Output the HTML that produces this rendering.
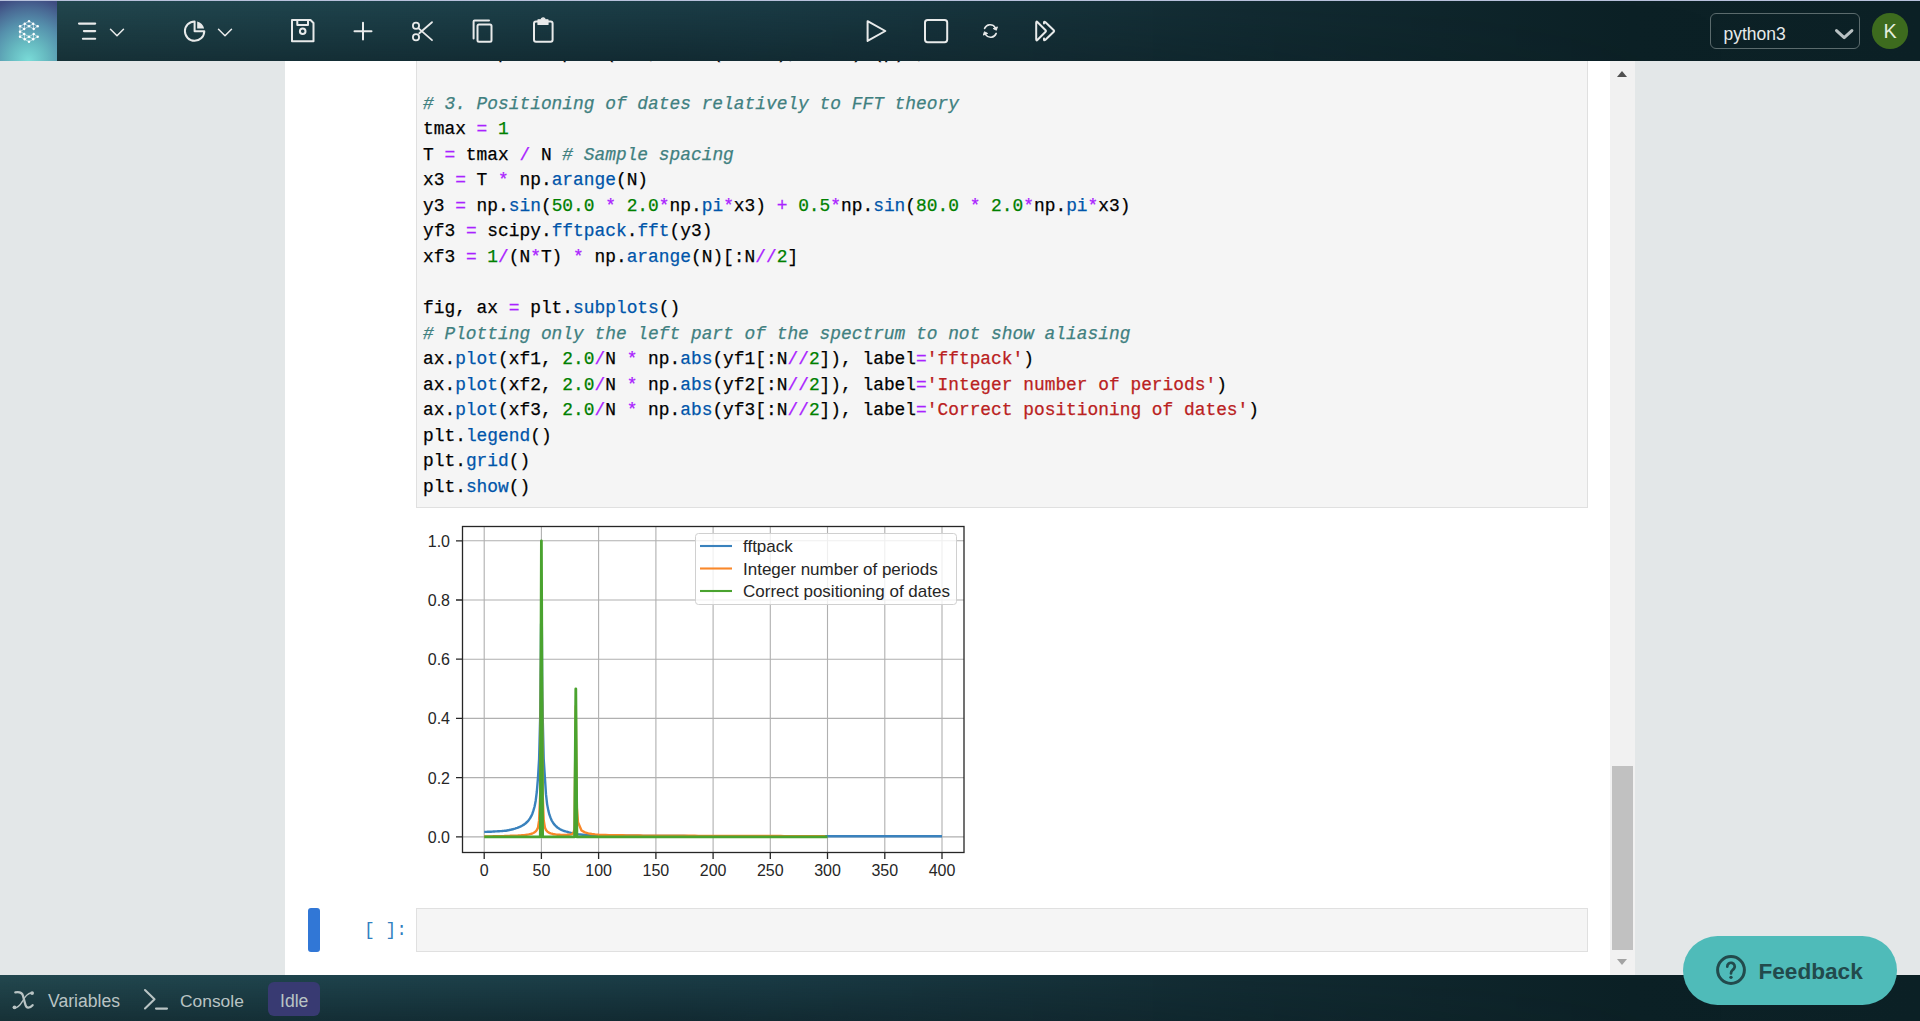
<!DOCTYPE html>
<html><head><meta charset="utf-8">
<style>
*{margin:0;padding:0;box-sizing:border-box}
html,body{width:1920px;height:1021px;overflow:hidden;background:#e3e7e8;font-family:"Liberation Sans",sans-serif;position:relative}
.abs{position:absolute}
#topline{left:0;top:0;width:1920px;height:1px;background:#b8c1dc}
#header{left:0;top:1px;width:1920px;height:60px;background:linear-gradient(90deg,#23484f 0%,#1f444d 15%,#1a3b45 40%,#122b32 65%,#0c2126 85%,#0b2025 100%)}
.shade{left:0;top:0;width:1920px;height:100%;background:linear-gradient(180deg,rgba(0,0,0,0) 0%,rgba(3,12,16,0.38) 100%);-webkit-mask-image:linear-gradient(90deg,#000 0%,#000 35%,rgba(0,0,0,0.3) 70%,rgba(0,0,0,0) 90%)}
#logo{left:0;top:0;width:57px;height:60px;background:radial-gradient(ellipse 62px 64px at 50% 100%,#7adcd8 0%,#66b9c0 30%,#5590ac 60%,#4a6c96 82%,#3f4c82 100%)}
#nb{left:285px;top:61px;width:1350px;height:914px;background:#fff}
#sbtrack{left:1610px;top:61px;width:25px;height:914px;background:#f1f1f1}
#sbthumb{left:1612px;top:766px;width:21px;height:184px;background:#c1c1c1}
.arr{width:0;height:0;border-left:5.6px solid transparent;border-right:5.6px solid transparent}
#codebox{left:416px;top:40px;width:1172px;height:468px;background:#f5f5f5;border:1px solid #e0e0e0}
#code{left:423px;top:0px;font-family:"Liberation Mono",monospace;font-size:17.87px;line-height:25.54px;white-space:pre;color:#000;-webkit-text-stroke:0.25px currentColor}
.c{color:#408080;font-style:italic}
.o{color:#aa22ff}
.n{color:#008000}
.p{color:#0055aa}
.s{color:#ba2121}
#footer{left:0;top:975px;width:1920px;height:46px;background:linear-gradient(90deg,#23484f 0%,#1f444d 15%,#1a3b45 40%,#122b32 65%,#0c2126 85%,#0b2025 100%)}
.ft{color:#b9c4c4;font-size:17.6px;top:990.5px}
#idle{left:268px;top:982px;width:52px;height:34px;background:#383a72;border-radius:6px}
#fb{left:1683px;top:936px;width:214px;height:69px;border-radius:35px;background:#4fbbb9}
#cellbar{left:308px;top:908px;width:12px;height:44px;background:#3177d6;border-radius:3px}
#prompt{left:364px;top:920px;font-family:"Liberation Mono",monospace;font-size:17.87px;color:#307fc1;white-space:pre}
#inbox{left:416px;top:908px;width:1172px;height:44px;background:#f5f5f5;border:1px solid #e0e0e0}
#clipcode{left:0;top:61px;width:1920px;height:914px;overflow:hidden}
</style></head><body>
<div id="topline" class="abs"></div>
<div id="nb" class="abs"></div>
<div id="sbtrack" class="abs"></div>
<div id="sbthumb" class="abs"></div>
<div class="abs arr" style="left:1617px;top:70.5px;border-bottom:6.5px solid #505050"></div>
<div class="abs arr" style="left:1617px;top:959px;border-top:6.2px solid #a3a3a3"></div>
<div id="clipcode" class="abs">
 <div id="codebox" class="abs" style="top:-40px;height:487px"></div>
 <div id="code" class="abs" style="top:-20.4px">xf2 = np.linspace(0.0, 1.0/(2.0*T), N//2) (p) ,

<span class="c"># 3. Positioning of dates relatively to FFT theory</span>
tmax <span class="o">=</span> <span class="n">1</span>
T <span class="o">=</span> tmax <span class="o">/</span> N <span class="c"># Sample spacing</span>
x3 <span class="o">=</span> T <span class="o">*</span> np.<span class="p">arange</span>(N)
y3 <span class="o">=</span> np.<span class="p">sin</span>(<span class="n">50.0</span> <span class="o">*</span> <span class="n">2.0</span><span class="o">*</span>np.<span class="p">pi</span><span class="o">*</span>x3) <span class="o">+</span> <span class="n">0.5</span><span class="o">*</span>np.<span class="p">sin</span>(<span class="n">80.0</span> <span class="o">*</span> <span class="n">2.0</span><span class="o">*</span>np.<span class="p">pi</span><span class="o">*</span>x3)
yf3 <span class="o">=</span> scipy.<span class="p">fftpack</span>.<span class="p">fft</span>(y3)
xf3 <span class="o">=</span> <span class="n">1</span><span class="o">/</span>(N<span class="o">*</span>T) <span class="o">*</span> np.<span class="p">arange</span>(N)[:N<span class="o">//</span><span class="n">2</span>]

fig, ax <span class="o">=</span> plt.<span class="p">subplots</span>()
<span class="c"># Plotting only the left part of the spectrum to not show aliasing</span>
ax.<span class="p">plot</span>(xf1, <span class="n">2.0</span><span class="o">/</span>N <span class="o">*</span> np.<span class="p">abs</span>(yf1[:N<span class="o">//</span><span class="n">2</span>]), label<span class="o">=</span><span class="s">'fftpack'</span>)
ax.<span class="p">plot</span>(xf2, <span class="n">2.0</span><span class="o">/</span>N <span class="o">*</span> np.<span class="p">abs</span>(yf2[:N<span class="o">//</span><span class="n">2</span>]), label<span class="o">=</span><span class="s">'Integer number of periods'</span>)
ax.<span class="p">plot</span>(xf3, <span class="n">2.0</span><span class="o">/</span>N <span class="o">*</span> np.<span class="p">abs</span>(yf3[:N<span class="o">//</span><span class="n">2</span>]), label<span class="o">=</span><span class="s">'Correct positioning of dates'</span>)
plt.<span class="p">legend</span>()
plt.<span class="p">grid</span>()
plt.<span class="p">show</span>()</div>
</div>
<!--CHART--><svg class="abs" style="left:416px;top:510px" width="560" height="380" viewBox="416 510 560 380">
<path d="M484.2 526V852.5M541.4 526V852.5M598.6 526V852.5M655.9 526V852.5M713.1 526V852.5M770.3 526V852.5M827.5 526V852.5M884.8 526V852.5M942.0 526V852.5M462.5 836.9H964M462.5 777.6H964M462.5 718.4H964M462.5 659.2H964M462.5 600.0H964M462.5 540.8H964" stroke="#b0b0b0" stroke-width="1.1" fill="none"/>
<path d="M484.2 832.0L485.3 831.9L486.5 831.9L487.6 831.8L488.8 831.8L489.9 831.7L491.1 831.7L492.2 831.6L493.4 831.5L494.5 831.5L495.6 831.4L496.8 831.4L497.9 831.3L499.1 831.2L500.2 831.1L501.4 831.1L502.5 831.0L503.7 830.9L504.8 830.8L505.9 830.7L507.1 830.5L508.2 830.3L509.4 830.0L510.5 829.8L511.7 829.5L512.8 829.3L514.0 828.9L515.1 828.6L516.2 828.2L517.4 827.9L518.5 827.4L519.7 826.9L520.8 826.4L522.0 825.8L523.1 825.1L524.3 824.4L525.4 823.5L526.5 822.5L527.7 821.4L528.8 820.0L530.0 818.4L531.1 816.4L532.3 813.9L533.4 810.7L534.6 806.5L535.7 800.7L536.8 792.0L538.0 777.6L539.1 759.0L540.3 712.5L540.4 705.6L540.5 697.4L540.6 687.5L540.7 675.2L540.9 659.3L541.0 637.8L541.1 623.7L541.2 623.7L541.3 623.7L541.4 623.7L541.5 623.7L541.7 623.7L541.8 623.7L541.9 637.8L542.0 659.3L542.1 675.2L542.2 687.5L542.3 697.4L542.5 705.6L542.6 712.5L543.7 759.0L544.9 777.6L546.0 794.4L547.1 804.1L548.3 810.4L549.4 814.7L550.6 817.9L551.7 820.5L552.9 822.5L554.0 824.1L555.2 825.4L556.3 826.5L557.4 827.5L558.6 828.3L559.7 829.0L560.9 829.6L562.0 830.1L563.2 830.6L564.3 831.0L565.5 831.4L566.6 831.7L567.7 832.0L568.9 832.3L570.0 832.6L571.2 832.9L572.3 833.1L573.5 833.4L574.6 833.6L575.2 826.3L575.8 819.0L576.3 826.5L576.9 834.0L578.0 834.2L582.7 834.7L587.3 835.1L591.9 835.2L596.5 835.3L601.1 835.4L605.7 835.5L610.3 835.5L614.9 835.6L619.5 835.7L624.1 835.7L628.7 835.8L633.3 835.8L637.9 835.8L642.5 835.9L647.2 835.9L651.8 835.9L656.4 836.0L661.0 836.0L665.6 836.0L670.2 836.0L674.8 836.0L679.4 836.0L684.0 836.0L688.6 836.1L693.2 836.1L697.8 836.1L702.4 836.1L707.0 836.1L711.7 836.1L716.3 836.1L720.9 836.1L725.5 836.1L730.1 836.1L734.7 836.1L739.3 836.2L743.9 836.2L748.5 836.2L753.1 836.2L757.7 836.2L762.3 836.2L766.9 836.2L771.5 836.2L776.1 836.2L780.8 836.2L785.4 836.2L790.0 836.2L794.6 836.2L799.2 836.2L803.8 836.2L808.4 836.2L813.0 836.2L817.6 836.3L822.2 836.3L826.8 836.3L831.4 836.3L836.0 836.3L840.6 836.3L845.3 836.3L849.9 836.3L854.5 836.3L859.1 836.3L863.7 836.3L868.3 836.3L872.9 836.3L877.5 836.3L882.1 836.3L886.7 836.3L891.3 836.3L895.9 836.3L900.5 836.3L905.1 836.3L909.8 836.3L914.4 836.3L919.0 836.3L923.6 836.3L928.2 836.3L932.8 836.3L937.4 836.3L942.0 836.3" stroke="#3a82bd" stroke-width="2.4" fill="none" stroke-linejoin="round"/>
<path d="M484.2 836.5L485.3 836.4L486.5 836.4L487.6 836.4L488.8 836.4L489.9 836.4L491.1 836.4L492.2 836.4L493.4 836.3L494.5 836.3L495.6 836.3L496.8 836.3L497.9 836.2L499.1 836.2L500.2 836.2L501.4 836.1L502.5 836.1L503.7 836.1L504.8 836.0L505.9 836.0L507.1 835.9L508.2 835.9L509.4 835.9L510.5 835.8L511.7 835.8L512.8 835.8L514.0 835.7L515.1 835.7L516.2 835.6L517.4 835.6L518.5 835.5L519.7 835.4L520.8 835.4L522.0 835.3L523.1 835.2L524.3 835.1L525.4 834.9L526.5 834.8L527.7 834.6L528.8 834.4L530.0 834.1L531.1 833.8L532.3 833.5L533.4 833.0L534.6 832.3L535.7 831.4L536.8 830.0L538.0 827.6L539.1 820.4L540.3 792.0L540.6 738.7L540.9 700.2L541.1 661.8L541.4 623.3L541.7 661.7L542.0 700.2L542.3 738.7L542.6 792.0L543.7 820.3L544.9 827.5L546.0 829.9L547.1 831.3L548.3 832.3L549.4 832.9L550.6 833.4L551.7 833.7L552.9 834.0L554.0 834.2L555.2 834.4L556.3 834.6L557.4 834.7L558.6 834.8L559.7 834.8L560.9 834.9L562.0 834.9L563.2 835.0L564.3 835.0L565.5 834.9L566.6 834.9L567.7 834.8L568.9 834.7L570.0 834.6L571.2 834.3L572.3 833.8L573.5 832.6L574.6 829.1L574.9 787.6L575.2 760.4L575.5 733.2L575.8 705.9L576.0 733.2L576.3 760.4L576.6 787.7L576.9 807.8L578.0 822.1L581.5 830.5L584.9 832.4L588.3 833.4L591.8 834.0L595.2 834.4L598.6 834.7L602.1 834.9L605.5 835.0L609.0 835.1L612.4 835.1L615.8 835.2L619.3 835.3L622.7 835.3L626.1 835.4L629.6 835.4L633.0 835.5L636.4 835.5L639.9 835.5L643.3 835.6L646.7 835.6L650.2 835.6L653.6 835.6L657.0 835.7L660.5 835.7L663.9 835.7L667.3 835.7L670.8 835.7L674.2 835.8L677.6 835.8L681.1 835.8L684.5 835.8L687.9 835.8L691.4 835.8L694.8 835.8L698.2 835.9L701.7 835.9L705.1 835.9L708.5 835.9L712.0 835.9L715.4 835.9L718.8 835.9L722.3 835.9L725.7 835.9L729.1 835.9L732.6 836.0L736.0 836.0L739.4 836.0L742.9 836.0L746.3 836.0L749.7 836.0L753.2 836.0L756.6 836.0L760.0 836.0L763.5 836.0L766.9 836.0L770.3 836.0L773.8 836.0L777.2 836.0L780.6 836.0L784.1 836.1L787.5 836.1L790.9 836.1L794.4 836.1L797.8 836.1L801.2 836.1L804.7 836.1L808.1 836.1L811.5 836.1L815.0 836.1L818.4 836.1L821.8 836.1L825.3 836.1" stroke="#f9882a" stroke-width="2.4" fill="none" stroke-linejoin="round"/>
<path d="M484.2 836.9L540.3 836.9L541.4 540.8L542.6 836.9L574.6 836.9L575.8 688.8L576.9 836.9L827.5 836.9" stroke="#4aa32f" stroke-width="2.8" fill="none" stroke-linejoin="round"/>
<path d="M541.1 836.9L541.6 623.7L542.1 836.9" stroke="#4aa32f" stroke-width="1.6" fill="#4aa32f" stroke-linejoin="round"/>
<rect x="462.5" y="526.5" width="501.5" height="326" fill="none" stroke="#262626" stroke-width="1.3"/>
<path d="M484.2 853V859M541.4 853V859M598.6 853V859M655.9 853V859M713.1 853V859M770.3 853V859M827.5 853V859M884.8 853V859M942.0 853V859M456 836.9H462M456 777.6H462M456 718.4H462M456 659.2H462M456 600.0H462M456 540.8H462" stroke="#262626" stroke-width="1.3" fill="none"/>
<text x="484.2" y="876" text-anchor="middle" font-size="16" fill="#262626" font-family="Liberation Sans">0</text>
<text x="541.4" y="876" text-anchor="middle" font-size="16" fill="#262626" font-family="Liberation Sans">50</text>
<text x="598.6" y="876" text-anchor="middle" font-size="16" fill="#262626" font-family="Liberation Sans">100</text>
<text x="655.9" y="876" text-anchor="middle" font-size="16" fill="#262626" font-family="Liberation Sans">150</text>
<text x="713.1" y="876" text-anchor="middle" font-size="16" fill="#262626" font-family="Liberation Sans">200</text>
<text x="770.3" y="876" text-anchor="middle" font-size="16" fill="#262626" font-family="Liberation Sans">250</text>
<text x="827.5" y="876" text-anchor="middle" font-size="16" fill="#262626" font-family="Liberation Sans">300</text>
<text x="884.8" y="876" text-anchor="middle" font-size="16" fill="#262626" font-family="Liberation Sans">350</text>
<text x="942.0" y="876" text-anchor="middle" font-size="16" fill="#262626" font-family="Liberation Sans">400</text>
<text x="450" y="842.8" text-anchor="end" font-size="16" fill="#262626" font-family="Liberation Sans">0.0</text>
<text x="450" y="783.5" text-anchor="end" font-size="16" fill="#262626" font-family="Liberation Sans">0.2</text>
<text x="450" y="724.3" text-anchor="end" font-size="16" fill="#262626" font-family="Liberation Sans">0.4</text>
<text x="450" y="665.1" text-anchor="end" font-size="16" fill="#262626" font-family="Liberation Sans">0.6</text>
<text x="450" y="605.9" text-anchor="end" font-size="16" fill="#262626" font-family="Liberation Sans">0.8</text>
<text x="450" y="546.6" text-anchor="end" font-size="16" fill="#262626" font-family="Liberation Sans">1.0</text>
<rect x="695.5" y="533.5" width="261" height="71" rx="3" fill="#ffffff" fill-opacity="0.8" stroke="#d0d0d0" stroke-width="1"/>
<path d="M700 546.0H732" stroke="#3a82bd" stroke-width="2.1"/>
<text x="743" y="552.0" font-size="17" fill="#262626" font-family="Liberation Sans">fftpack</text>
<path d="M700 568.5H732" stroke="#f9882a" stroke-width="2.1"/>
<text x="743" y="574.5" font-size="17" fill="#262626" font-family="Liberation Sans">Integer number of periods</text>
<path d="M700 591.0H732" stroke="#4aa32f" stroke-width="2.1"/>
<text x="743" y="597.0" font-size="17" fill="#262626" font-family="Liberation Sans">Correct positioning of dates</text>
</svg><!--/CHART-->
<div id="cellbar" class="abs"></div>
<div id="prompt" class="abs">[ ]:</div>
<div id="inbox" class="abs"></div>
<div id="header" class="abs"><div class="abs shade"></div><div id="logo" class="abs"></div></div>
<!--HDR--><svg class="abs" style="left:0;top:0" width="1920" height="61" viewBox="0 0 1920 61"><path d="M29.0 21.2L24.7 23.8M29.0 21.2L33.2 23.8M24.7 23.8L29.0 26.3M33.2 23.8L29.0 26.3M24.7 23.8L20.0 26.3M33.2 23.8L37.7 26.3M20.0 26.3L24.2 29.0M37.7 26.3L33.7 29.0M24.7 23.8L24.2 29.0M33.2 23.8L33.7 29.0M29.0 26.3L24.2 29.0M29.0 26.3L33.7 29.0M20.0 26.3L20.0 31.7M24.2 29.0L20.0 31.7M29.0 41.8L24.7 39.2M29.0 41.8L33.2 39.2M24.7 39.2L29.0 36.7M33.2 39.2L29.0 36.7M24.7 39.2L20.0 36.7M33.2 39.2L37.7 36.7M20.0 36.7L24.2 34.0M37.7 36.7L33.7 34.0M24.7 39.2L24.2 34.0M33.2 39.2L33.7 34.0M29.0 36.7L24.2 34.0M29.0 36.7L33.7 34.0M20.0 36.7L20.0 31.3M24.2 34.0L20.0 31.3" stroke="#fff" stroke-width="0.8" fill="none" opacity="0.7"/><circle cx="29.0" cy="21.2" r="1.2" fill="#fff"/><circle cx="24.7" cy="23.8" r="1.2" fill="#fff"/><circle cx="33.2" cy="23.8" r="1.2" fill="#fff"/><circle cx="20.0" cy="26.3" r="1.2" fill="#fff"/><circle cx="37.7" cy="26.3" r="1.2" fill="#fff"/><circle cx="29.0" cy="26.3" r="1.2" fill="#fff"/><circle cx="24.2" cy="29.0" r="1.2" fill="#fff"/><circle cx="33.7" cy="29.0" r="1.2" fill="#fff"/><circle cx="20.0" cy="31.7" r="1.2" fill="#fff"/><circle cx="29.0" cy="41.8" r="1.2" fill="#fff"/><circle cx="24.7" cy="39.2" r="1.2" fill="#fff"/><circle cx="33.2" cy="39.2" r="1.2" fill="#fff"/><circle cx="20.0" cy="36.7" r="1.2" fill="#fff"/><circle cx="37.7" cy="36.7" r="1.2" fill="#fff"/><circle cx="29.0" cy="36.7" r="1.2" fill="#fff"/><circle cx="24.2" cy="34.0" r="1.2" fill="#fff"/><circle cx="33.7" cy="34.0" r="1.2" fill="#fff"/><path d="M79 23.6H95.2M83.9 31.1H95.2M82.9 38.7H95.2" stroke="#e8eaea" fill="none" stroke-linecap="round" stroke-linejoin="round" stroke-width="2.1"/><path d="M110.5 29.2L117 35.8L123.5 29.2M218.5 29.2L225 35.8L231.5 29.2" stroke="#e8eaea" fill="none" stroke-linecap="round" stroke-linejoin="round" stroke-width="1.5"/><path d="M194.6 21.4A9.7 9.7 0 1 0 204.3 31.2H194.6Z" stroke="#e8eaea" fill="none" stroke-linecap="round" stroke-linejoin="round" stroke-width="2"/><path d="M197.2 21.6A9.6 9.6 0 0 1 204.1 28.6H197.2Z" fill="#e8eaea"/><path d="M292 20H310.5L313.5 23V41.2H292Z" stroke="#e8eaea" fill="none" stroke-linecap="round" stroke-linejoin="round" stroke-width="2"/><path d="M297.3 20V25H308V20" stroke="#e8eaea" fill="none" stroke-linecap="round" stroke-linejoin="round" stroke-width="2"/><circle cx="302.7" cy="31.2" r="2.8" stroke="#e8eaea" fill="none" stroke-linecap="round" stroke-linejoin="round" stroke-width="2"/><path d="M363 22.8V39.5M354.5 31.2H371.5" stroke="#e8eaea" fill="none" stroke-linecap="round" stroke-linejoin="round" stroke-width="2"/><circle cx="416" cy="25.8" r="3.1" stroke="#e8eaea" fill="none" stroke-linecap="round" stroke-linejoin="round" stroke-width="1.8"/><circle cx="416" cy="37.2" r="3.1" stroke="#e8eaea" fill="none" stroke-linecap="round" stroke-linejoin="round" stroke-width="1.8"/><path d="M418.6 28.3L432 40.2M419.3 33.3L432 22.2" stroke="#e8eaea" fill="none" stroke-linecap="round" stroke-linejoin="round" stroke-width="1.8"/><path d="M473.6 38.5V21.5Q473.6 20.5 474.6 20.5H489" stroke="#e8eaea" fill="none" stroke-linecap="round" stroke-linejoin="round" stroke-width="2"/><rect x="477.5" y="24.6" width="14" height="17.2" rx="1.5" stroke="#e8eaea" fill="none" stroke-linecap="round" stroke-linejoin="round" stroke-width="2"/><rect x="534" y="21.6" width="18.6" height="20.2" rx="2" stroke="#e8eaea" fill="none" stroke-linecap="round" stroke-linejoin="round" stroke-width="2"/><path d="M538 19.8H541.2A1.8 1.8 0 0 1 545 19.8H548V24.4H538Z" fill="#e8eaea" stroke="#e8eaea" stroke-width="1.2" stroke-linejoin="round"/><path d="M867.6 21.2L885.3 31L867.6 40.9Z" stroke="#e8eaea" fill="none" stroke-linecap="round" stroke-linejoin="round" stroke-width="2"/><rect x="925" y="20" width="22.2" height="22.2" rx="2.6" stroke="#e8eaea" fill="none" stroke-linecap="round" stroke-linejoin="round" stroke-width="2"/><path d="M984.6 28.4A6 6 0 0 1 995.2 27.6M996.2 33.4A6 6 0 0 1 985.6 34.6" stroke="#e8eaea" fill="none" stroke-linecap="round" stroke-linejoin="round" stroke-width="1.6"/><path d="M997.4 26.9L996.4 30.2L993.2 28.6Z M983.4 35.1L984.4 31.8L987.6 33.4Z" fill="#e8eaea" stroke="#e8eaea" stroke-width="1" stroke-linejoin="round"/><path d="M1036.2 22.8Q1036.2 20.8 1037.6 22.2L1045.6 30.3Q1046.3 31 1045.6 31.7L1037.6 39.8Q1036.2 41.2 1036.2 39.2Z" stroke="#e8eaea" fill="none" stroke-linecap="round" stroke-linejoin="round" stroke-width="2"/><path d="M1044 23.4Q1043.6 21 1045.2 22L1053.8 30.3Q1054.5 31 1053.8 31.7L1045.2 40Q1043.6 41 1044 38.6" stroke="#e8eaea" fill="none" stroke-linecap="round" stroke-linejoin="round" stroke-width="2"/><rect x="1710.5" y="13.5" width="149" height="35" rx="5.5" fill="none" stroke="#5b6b6d" stroke-width="1"/><path d="M1836.5 30.6L1844.2 37.6L1851.9 30.6" stroke="#b8c0c2" stroke-width="3" fill="none" stroke-linecap="round" stroke-linejoin="round"/><text x="1723.5" y="39.5" font-family="Liberation Sans" font-size="17.5" fill="#e6eaea">python3</text><circle cx="1890" cy="31" r="18.1" fill="#3d6b1e"/><text x="1890" y="38.4" text-anchor="middle" font-family="Liberation Sans" font-size="19.8" fill="#e6efdf">K</text></svg><!--/HDR-->
<div id="footer" class="abs"><div class="abs shade"></div></div>
<div class="abs ft" style="left:48px">Variables</div>
<div class="abs ft" style="left:180px;font-size:17.4px">Console</div>
<div id="idle" class="abs"></div>
<svg class="abs" style="left:0;top:975px" width="400" height="46" viewBox="0 975 400 46">
<path d="M15.3 992.3C19.5 991.6 21.8 992 22.9 995.5L25.4 1004.8C26.4 1008.6 29.5 1008.6 32.6 1005.2" stroke="#b9c4c4" stroke-width="2.3" fill="none" stroke-linecap="round"/><path d="M14.4 1007.9C18.2 1008 20 1005.5 22.4 1001.4C25 997 27.2 993 32.2 992.8" stroke="#b9c4c4" stroke-width="1.4" fill="none" stroke-linecap="round"/><circle cx="14.5" cy="1007.3" r="1.9" fill="#b9c4c4"/><circle cx="32.1" cy="993.1" r="1.9" fill="#b9c4c4"/>
<path d="M145 990L154.5 999.2L145 1008.4M156 1008.6H167" stroke="#b9c4c4" stroke-width="2.1" fill="none" stroke-linecap="round" stroke-linejoin="round"/>
</svg>
<div class="abs ft" style="left:280px">Idle</div>
<svg class="abs" style="left:1683px;top:936px" width="214" height="69" viewBox="1683 936 214 69">
<rect x="1683" y="936" width="214" height="69" rx="34.5" fill="#4fbbb9"/>
<circle cx="1731" cy="970" r="13.4" fill="none" stroke="#224a4c" stroke-width="3"/>
<path d="M1727.3 966.6A3.7 3.7 0 1 1 1734.2 968.3Q1733.6 969.3 1732.4 970.3Q1731 971.5 1731 973.4" stroke="#224a4c" stroke-width="2.7" fill="none" stroke-linecap="round"/><circle cx="1731" cy="977.3" r="1.65" fill="#224a4c"/>
<text x="1758.5" y="979" font-family="Liberation Sans" font-weight="bold" font-size="22.6" fill="#224a4c">Feedback</text>
</svg>
</body></html>
